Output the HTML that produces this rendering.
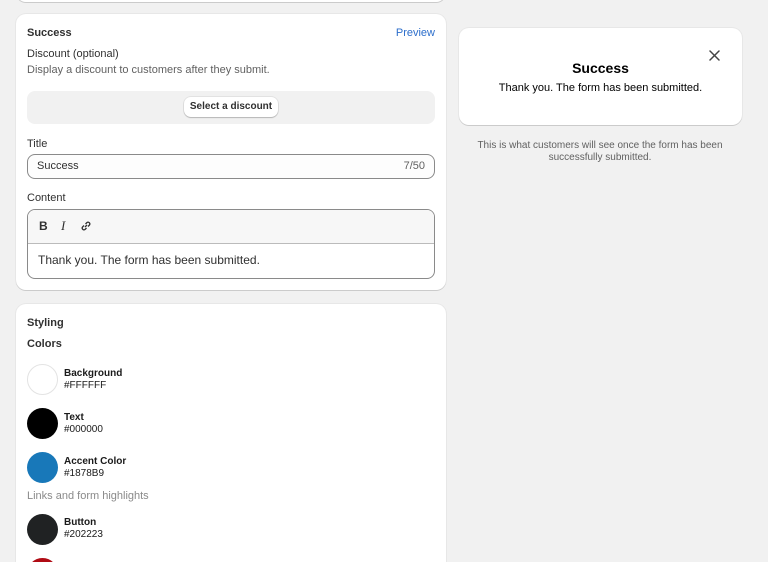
<!DOCTYPE html>
<html style="width:768px;height:562px;overflow:hidden"><head><style>
*{box-sizing:border-box;margin:0;padding:0}
body{width:768px;height:562px;overflow:hidden;background:#f1f1f1;font-family:"Liberation Sans",sans-serif;font-size:11px;color:#303030;position:relative}
.card{position:absolute;background:#fff;border-radius:10px;box-shadow:0 1px 0 rgba(0,0,0,.12),0 0 0 1px rgba(0,0,0,.04)}
.abs{position:absolute}
.b{font-weight:bold}
.sw{position:absolute;left:27px;width:31px;height:31px;border-radius:50%}
.lbl{position:absolute;left:64px;font-size:10px;color:#1a1a1a;line-height:12px}
</style></head><body>
<div class="card" style="left:16px;top:-20px;width:430px;height:22px;border-radius:0 0 10px 10px"></div>
<div class="card" style="left:16px;top:14px;width:430px;height:276px">
  <div class="abs b" style="left:11px;top:13px">Success</div>
  <div class="abs" style="right:11px;top:13px;color:#2c6ecb">Preview</div>
  <div class="abs" style="left:11px;top:34px">Discount (optional)</div>
  <div class="abs" style="left:11px;top:50px;color:#616161">Display a discount to customers after they submit.</div>
  <div class="abs" style="left:11px;top:77px;width:408px;height:33px;background:#f1f1f1;border-radius:8px"></div>
  <div class="abs b" style="left:168px;top:83px;width:94px;height:20px;background:#fff;border-radius:7px;box-shadow:0 1px 1px rgba(0,0,0,.2),0 0 0 1px rgba(0,0,0,.06);font-size:10px;text-align:center;line-height:20px">Select a discount</div>
  <div class="abs" style="left:11px;top:124px">Title</div>
  <div class="abs" style="left:11px;top:140px;width:408px;height:25px;border:1px solid #8a8a8a;border-radius:8px;background:#fdfdfd"></div>
  <div class="abs" style="left:21px;top:146px">Success</div>
  <div class="abs" style="right:21px;top:146px;color:#616161">7/50</div>
  <div class="abs" style="left:11px;top:178px">Content</div>
  <div class="abs" style="left:11px;top:195px;width:408px;height:70px;border:1px solid #8a8a8a;border-radius:8px;overflow:hidden">
    <div style="height:34px;background:#f7f7f7;border-bottom:1px solid #bbb;position:relative">
      <span class="abs b" style="left:11px;top:9px;font-size:12px">B</span>
      <span class="abs" style="left:33px;top:8px;font-size:13px;font-family:'Liberation Serif',serif;font-style:italic">I</span>
      <svg class="abs" style="left:52px;top:10px" width="12" height="12" viewBox="0 0 12 12" fill="none" stroke="#303030" stroke-width="1.3"><path d="M5 7l2-2M4 5.5L2.5 7a1.8 1.8 0 002.5 2.5L6.5 8M8 6.5L9.5 5A1.8 1.8 0 007 2.5L5.5 4"/></svg>
    </div>
    <div style="padding:9px 10px;font-size:12px">Thank you. The form has been submitted.</div>
  </div>
</div>
<div class="card" style="left:16px;top:304px;width:430px;height:280px">
  <div class="abs b" style="left:11px;top:13px">Styling</div>
  <div class="abs b" style="left:11px;top:34px">Colors</div>
</div>
<div class="sw" style="top:364px;border:1px solid #e3e3e3;background:#fff"></div>
<div class="lbl b" style="top:368px">Background</div><div class="lbl" style="top:380px">#FFFFFF</div>
<div class="sw" style="top:408px;background:#000"></div>
<div class="lbl b" style="top:412px">Text</div><div class="lbl" style="top:424px">#000000</div>
<div class="sw" style="top:452px;background:#1878b9"></div>
<div class="lbl b" style="top:456px">Accent Color</div><div class="lbl" style="top:468px">#1878B9</div>
<div class="abs" style="left:27px;top:490px;color:#8a8a8a">Links and form highlights</div>
<div class="sw" style="top:514px;background:#202223"></div>
<div class="lbl b" style="top:517px">Button</div><div class="lbl" style="top:529px">#202223</div>
<div class="sw" style="top:558px;background:#b00b14"></div>
<div class="card" style="left:459px;top:28px;width:283px;height:97px">
  <svg class="abs" style="left:250px;top:22px" width="11" height="11" viewBox="0 0 11 11" stroke="#444" stroke-width="1.5" stroke-linecap="round"><path d="M1 1l9 9M10 1l-9 9"/></svg>
  <div class="abs b" style="left:0;width:283px;top:32px;text-align:center;font-size:14px;color:#000">Success</div>
  <div class="abs" style="left:0;width:283px;top:54px;text-align:center;color:#000">Thank you. The form has been submitted.</div>
</div>
<div class="abs" style="left:470px;width:260px;top:140px;text-align:center;font-size:10px;color:#616161;line-height:12px">This is what customers will see once the form has been successfully submitted.</div>
</body></html>
